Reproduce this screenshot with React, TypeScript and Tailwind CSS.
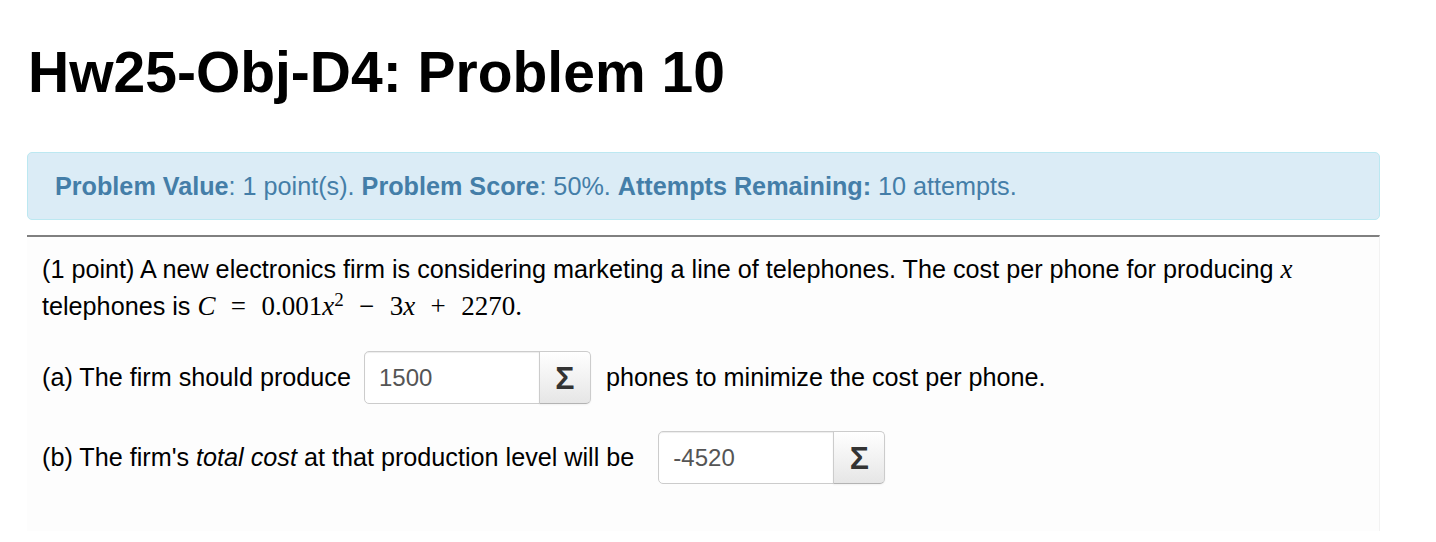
import React from 'react';

function AnswerBox({ value, gap = 'ml-[13px]' }: { value: string; gap?: string }) {
  return (
    <span className={`inline-flex align-middle h-[53px] mr-[13px] ${gap}`}>
      <span className="flex items-center w-[176px] border border-[#cccccc] rounded-l-[5px] bg-white pl-[14px] text-[24px] text-[#555555] shadow-[inset_0_1px_1px_rgba(0,0,0,0.075)]">
        {value}
      </span>
      <span className="flex items-center justify-center w-[52px] -ml-px border border-[#cccccc] border-b-[#b3b3b3] rounded-r-[5px] bg-gradient-to-b from-white to-[#e6e6e6] text-[32px] font-bold text-[#333333] shadow-[0_1px_2px_rgba(0,0,0,0.05)]">
        Σ
      </span>
    </span>
  );
}

function Op({ children }: { children: React.ReactNode }) {
  return <span className="inline-block w-[22px] mx-[12px] text-center">{children}</span>;
}

export default function App() {
  const serif = "font-['Liberation_Serif','Times_New_Roman',serif] text-[27px]";
  return (
    <div className="min-h-screen bg-white font-['Liberation_Sans',Arial,sans-serif] text-black">
      <div className="ml-[27px] w-[1353px] pt-[41px]">
        <h1 className="text-[57px] leading-[63px] font-bold pl-px">Hw25-Obj-D4: Problem 10</h1>

        <div className="mt-[48px] border border-[#bce8f1] bg-[#dbecf6] rounded-[5px] px-[27px] py-[19px] text-[25.2px] leading-[28px] text-[#447ea8]">
          <b>Problem Value</b>: 1 point(s). <b>Problem Score</b>: 50%. <b>Attempts Remaining:</b> 10 attempts.
        </div>

        <div className="mt-[15px] border-t-2 border-[#808080] bg-[#fdfdfd] border-r border-r-[#f2f2f2] pl-[15px] pt-[14px] pb-[47px] text-[25.2px]">
          <p className="leading-[37px]">
            (1 point) A new electronics firm is considering marketing a line of telephones. The cost per phone for producing{' '}
            <i className={serif}>x</i>
            <br />
            telephones is{' '}
            <span className={serif}>
              <i>C</i>
              <Op>=</Op>0.001<i>x</i>
              <sup className="text-[19px]">2</sup>
              <Op>−</Op>3<i>x</i>
              <Op>+</Op>2270.
            </span>
          </p>

          <div className="mt-[26px] flex items-center h-[53px]">
            <span>(a) The firm should produce</span>
            <AnswerBox value="1500" />
            <span className="ml-[2px]">phones to minimize the cost per phone.</span>
          </div>

          <div className="mt-[27px] flex items-center h-[53px]">
            <span>
              (b) The firm's <i>total cost</i> at that production level will be
            </span>
            <AnswerBox value="-4520" gap="ml-[24px]" />
          </div>
        </div>
      </div>
    </div>
  );
}
